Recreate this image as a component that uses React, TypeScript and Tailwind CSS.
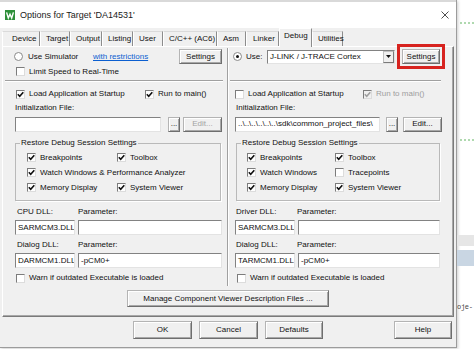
import React from "react";

const sunken =
  "border border-t-[#828282] border-l-[#828282] border-r-[#e3e3e3] border-b-[#e3e3e3] bg-white";

const tabs = [
  { label: "Device", cls: "w-[38px] pl-[9px]" },
  { label: "Target", cls: "w-[30px] pl-[5px]" },
  { label: "Output", cls: "w-[32px] pl-[5px]" },
  { label: "Listing", cls: "w-[31px] pl-[5px]" },
  { label: "User", cls: "w-[30px] pl-[5px]" },
  { label: "C/C++ (AC6)", cls: "w-[54px] pl-[5px]" },
  { label: "Asm", cls: "w-[29px] pl-[5px]" },
  { label: "Linker", cls: "w-[33px] pl-[6px]" },
  { label: "Debug", cls: "w-[33px] pl-[4px]", active: true },
  { label: "Utilities", cls: "w-[31px] pl-[5px]" },
];

function Check({ checked = false, disabled = false }: { checked?: boolean; disabled?: boolean }) {
  return (
    <span
      className={`flex h-[9px] w-[9px] shrink-0 items-center justify-center border border-t-[#7c7c7c] border-l-[#7c7c7c] border-r-[#dcdcdc] border-b-[#dcdcdc] ${
        disabled ? "bg-[#f0f0f0]" : "bg-white"
      }`}
    >
      {checked && (
        <svg width="7" height="7" viewBox="0 0 7 7">
          <path
            d="M0.8 3.3 L2.7 5.3 L6.3 1.2"
            fill="none"
            stroke={disabled ? "#a0a0a0" : "#111"}
            strokeWidth="1.6"
          />
        </svg>
      )}
    </span>
  );
}

function CheckItem({
  label,
  checked = false,
  disabled = false,
  className = "",
}: {
  label: string;
  checked?: boolean;
  disabled?: boolean;
  className?: string;
}) {
  return (
    <div className={`flex items-center gap-[4px] whitespace-nowrap ${className}`}>
      <Check checked={checked} disabled={disabled} />
      <span className={disabled ? "text-[#9d9d9d]" : ""}>{label}</span>
    </div>
  );
}

function Radio({ checked = false }: { checked?: boolean }) {
  return (
    <span className="flex h-[9px] w-[9px] shrink-0 items-center justify-center rounded-full border border-[#8a8a8a] bg-white">
      {checked && <span className="h-[3px] w-[3px] rounded-full bg-[#111]" />}
    </span>
  );
}

function Btn({
  children,
  className = "",
  disabled = false,
}: {
  children: React.ReactNode;
  className?: string;
  disabled?: boolean;
}) {
  return (
    <div
      className={`flex shrink-0 items-center justify-center whitespace-nowrap border border-[#b4b4b4] border-r-[#6e6e6e] border-b-[#6e6e6e] bg-[#f0f0f0] shadow-[inset_1px_1px_0_#fff,inset_-1px_-1px_0_#a8a8a8] ${
        disabled ? "text-[#a3a3a3]" : "text-[#111]"
      } ${className}`}
    >
      {children}
    </div>
  );
}

function Field({ value = "", className = "" }: { value?: string; className?: string }) {
  return (
    <div className={`flex shrink-0 items-center overflow-hidden whitespace-nowrap pl-[2px] ${sunken} ${className}`}>
      {value}
    </div>
  );
}

function Separator({ className = "" }: { className?: string }) {
  return <div className={`h-[2px] border-t border-t-[#a0a0a0] bg-white ${className}`} />;
}

function Group({
  className,
  rowPad,
  firstW,
  rows,
}: {
  className: string;
  rowPad: string;
  firstW: string;
  rows: [string, boolean, string?, boolean?][];
}) {
  return (
    <fieldset className={`shrink-0 border border-[#b9b9b9] pb-[5px] pt-[2px] shadow-[1px_1px_0_#fff] ${className}`}>
      <legend className="ml-[4px] px-[1px] leading-[10px]">Restore Debug Session Settings</legend>
      {rows.map(([a, ac, b, bc]) => (
        <div key={a} className={`flex h-[15px] items-center ${rowPad}`}>
          <CheckItem label={a} checked={ac} className={b ? firstW : ""} />
          {b && <CheckItem label={b} checked={bc} />}
        </div>
      ))}
    </fieldset>
  );
}

function Dots({ className }: { className: string }) {
  return (
    <svg className={className} width="14" height="2" viewBox="0 0 14 2">
      <circle cx="1" cy="1" r="0.8" fill="#4aa84a" />
      <circle cx="5" cy="1" r="0.8" fill="#4aa84a" />
      <circle cx="9" cy="1" r="0.8" fill="#4aa84a" />
      <circle cx="13" cy="1" r="0.8" fill="#4aa84a" />
    </svg>
  );
}

export default function App() {
  return (
    <div className="flex h-[349px] w-[474px] overflow-hidden bg-white font-['Liberation_Sans',Arial,sans-serif] text-[8px] leading-none text-[#111]">
      <div className="flex h-[348px] w-[457px] shrink-0 flex-col border-r border-b border-[#9c9c9c] bg-[#f0f0f0] shadow-[1px_1px_3px_rgba(0,0,0,0.2)]">
        {/* title bar */}
        <div className="flex h-[28px] shrink-0 items-center border-t-2 border-[#d9d9d9] bg-white pl-[5px] pr-[7px]">
          <svg width="10" height="10" viewBox="0 0 10 10">
            <rect width="10" height="10" fill="#2f8f3a" />
            <path d="M1.6 2.4 L3.3 8 L5 4.2 L6.7 8 L8.4 2.4" fill="none" stroke="#fff" strokeWidth="1.4" />
          </svg>
          <span className="ml-[5px] text-[9px] text-[#1a1a1a]">Options for Target 'DA14531'</span>
          <svg className="ml-auto" width="8" height="8" viewBox="0 0 8 8">
            <path d="M0.5 0.5 L7.5 7.5 M7.5 0.5 L0.5 7.5" stroke="#3a3a3a" strokeWidth="0.9" />
          </svg>
        </div>

        {/* tabs */}
        <div className="flex h-[18px] shrink-0 items-end pl-[2px]">
          {tabs.map((t) =>
            t.active ? (
              <div
                key={t.label}
                className={`relative z-10 -mb-px flex h-[19px] shrink-0 items-start whitespace-nowrap border-t border-l border-r border-t-white border-l-white border-r-[#8c8c8c] bg-[#f0f0f0] pt-[3px] ${t.cls}`}
              >
                {t.label}
              </div>
            ) : (
              <div
                key={t.label}
                className={`flex h-[15px] shrink-0 items-center whitespace-nowrap border-t border-l border-r border-t-[#dadada] border-l-white border-r-[#8c8c8c] ${t.cls}`}
              >
                {t.label}
              </div>
            )
          )}
        </div>

        {/* tab panel */}
        <div className="mx-[2px] flex h-[271px] shrink-0 flex-col border border-t-white border-l-white border-r-[#7a7a7a] border-b-[#7a7a7a] px-[2px] shadow-[inset_-1px_-1px_0_#a8a8a8]">
          <div className="flex h-[239px] shrink-0">
            {/* left column */}
            <div className="flex w-[222px] shrink-0 flex-col pt-[2px]">
              <div className="flex h-[15px] items-center pl-[9px] pr-[5px]">
                <Radio />
                <span className="ml-[5px] w-[65px] whitespace-nowrap">Use Simulator</span>
                <span className="whitespace-nowrap text-[#0b5fd0] underline">with restrictions</span>
                <Btn className="ml-auto h-[15px] w-[43px]">Settings</Btn>
              </div>
              <div className="flex h-[15px] items-center pl-[11px]">
                <CheckItem label="Limit Speed to Real-Time" />
              </div>
              <Separator className="mr-[4px] mt-[1px]" />
              <div className="mt-[5px] flex h-[14px] items-center pl-[11px]">
                <CheckItem label="Load Application at Startup" checked className="w-[129px]" />
                <CheckItem label="Run to main()" checked />
              </div>
              <div className="flex h-[14px] items-center pl-[10px]">Initialization File:</div>
              <div className="mt-[1px] flex h-[16px] items-center pl-[10px]">
                <Field className="h-[15px] w-[146px]" />
                <Btn className="ml-[7px] h-[15px] w-[12px]">...</Btn>
                <Btn className="ml-[3px] h-[15px] w-[39px]" disabled>
                  Edit...
                </Btn>
              </div>
              <Group
                className="ml-[10px] mt-[6px] w-[206px]"
                rowPad="pl-[11px]"
                firstW="w-[90px]"
                rows={[
                  ["Breakpoints", true, "Toolbox", true],
                  ["Watch Windows & Performance Analyzer", true],
                  ["Memory Display", true, "System Viewer", true],
                ]}
              />
              <div className="mt-[4px] flex h-[14px] items-center pl-[12px]">
                <span className="w-[61px]">CPU DLL:</span>
                <span>Parameter:</span>
              </div>
              <div className="mt-[1px] flex h-[15px] pl-[10px]">
                <Field value="SARMCM3.DLL" className="h-[15px] w-[60px]" />
                <Field className="ml-[3px] h-[15px] w-[144px]" />
              </div>
              <div className="mt-[3px] flex h-[14px] items-center pl-[12px]">
                <span className="w-[61px]">Dialog DLL:</span>
                <span>Parameter:</span>
              </div>
              <div className="mt-[1px] flex h-[15px] pl-[10px]">
                <Field value="DARMCM1.DLL" className="h-[15px] w-[60px]" />
                <Field value="-pCM0+" className="ml-[3px] h-[15px] w-[144px]" />
              </div>
              <div className="mt-[3px] flex h-[14px] items-center pl-[11px]">
                <CheckItem label="Warn if outdated Executable is loaded" />
              </div>
            </div>

            {/* column separator */}
            <div className="mt-[1px] w-[2px] shrink-0 border-l border-l-[#a0a0a0] bg-white" />

            {/* right column */}
            <div className="flex w-[222px] shrink-0 flex-col pt-[2px]">
              <div className="flex h-[15px] items-center pl-[4px]">
                <Radio checked />
                <span className="ml-[4px] w-[21px]">Use:</span>
                <div className={`flex h-[14px] w-[128px] shrink-0 items-center ${sunken}`}>
                  <span className="whitespace-nowrap pl-[2px]">J-LINK / J-TRACE Cortex</span>
                  <span className="ml-auto flex h-full w-[11px] items-center justify-center border border-[#c0c0c0] border-r-[#7a7a7a] border-b-[#7a7a7a] bg-[#f0f0f0]">
                    <svg width="5" height="3" viewBox="0 0 5 3">
                      <path d="M0 0 H5 L2.5 3 Z" fill="#111" />
                    </svg>
                  </span>
                </div>
                <Btn className="ml-[7px] h-[15px] w-[38px] outline-[3px] outline-offset-2 outline-[#d7231f]">
                  Settings
                </Btn>
              </div>
              <div className="h-[15px]" />
              <Separator className="ml-[1px] mr-[10px] mt-[1px]" />
              <div className="mt-[5px] flex h-[14px] items-center pl-[6px]">
                <CheckItem label="Load Application at Startup" className="w-[128px]" />
                <CheckItem label="Run to main()" checked disabled />
              </div>
              <div className="flex h-[14px] items-center pl-[7px]">Initialization File:</div>
              <div className="mt-[1px] flex h-[16px] items-center pl-[6px]">
                <Field value="..\..\..\..\..\..\sdk\common_project_files\" className="h-[15px] w-[145px]" />
                <Btn className="ml-[6px] h-[15px] w-[12px]">...</Btn>
                <Btn className="ml-[5px] h-[15px] w-[39px]">Edit...</Btn>
              </div>
              <Group
                className="ml-[7px] mt-[6px] w-[204px]"
                rowPad="pl-[10px]"
                firstW="w-[88px]"
                rows={[
                  ["Breakpoints", true, "Toolbox", true],
                  ["Watch Windows", true, "Tracepoints", false],
                  ["Memory Display", true, "System Viewer", true],
                ]}
              />
              <div className="mt-[4px] flex h-[14px] items-center pl-[7px]">
                <span className="w-[61px]">Driver DLL:</span>
                <span>Parameter:</span>
              </div>
              <div className="mt-[1px] flex h-[15px] pl-[6px]">
                <Field value="SARMCM3.DLL" className="h-[15px] w-[60px]" />
                <Field className="ml-[3px] h-[15px] w-[142px]" />
              </div>
              <div className="mt-[3px] flex h-[14px] items-center pl-[7px]">
                <span className="w-[61px]">Dialog DLL:</span>
                <span>Parameter:</span>
              </div>
              <div className="mt-[1px] flex h-[15px] pl-[6px]">
                <Field value="TARMCM1.DLL" className="h-[15px] w-[60px]" />
                <Field value="-pCM0+" className="ml-[3px] h-[15px] w-[142px]" />
              </div>
              <div className="mt-[3px] flex h-[14px] items-center pl-[8px]">
                <CheckItem label="Warn if outdated Executable is loaded" />
              </div>
            </div>
          </div>

          <div className="mt-[4px] flex justify-center">
            <Btn className="h-[17px] w-[202px]">Manage Component Viewer Description Files ...</Btn>
          </div>
        </div>

        {/* dialog buttons */}
        <div className="mt-[4px] flex h-[18px] shrink-0 gap-[7px] pl-[133px] pr-[4px]">
          <Btn className="h-[18px] w-[59px]">OK</Btn>
          <Btn className="h-[18px] w-[59px]">Cancel</Btn>
          <Btn className="h-[18px] w-[58px]">Defaults</Btn>
          <Btn className="ml-auto h-[18px] w-[58px]">Help</Btn>
        </div>
      </div>

      {/* editor behind the dialog */}
      <div className="flex min-w-0 flex-1 flex-col">
        <Dots className="ml-[3px] mt-[22px]" />
        <Dots className="ml-[3px] mt-[115px]" />
        <div className="mt-[94px] h-[11px] bg-[#e6e6e6]" />
        <div className="mt-[4px] h-[16px] bg-[#c9d6e3]" />
        <div className="mt-[38px] whitespace-nowrap font-['Liberation_Mono',monospace] text-[7px] tracking-[-0.3px] text-[#444]">
          oje-
        </div>
      </div>
    </div>
  );
}
